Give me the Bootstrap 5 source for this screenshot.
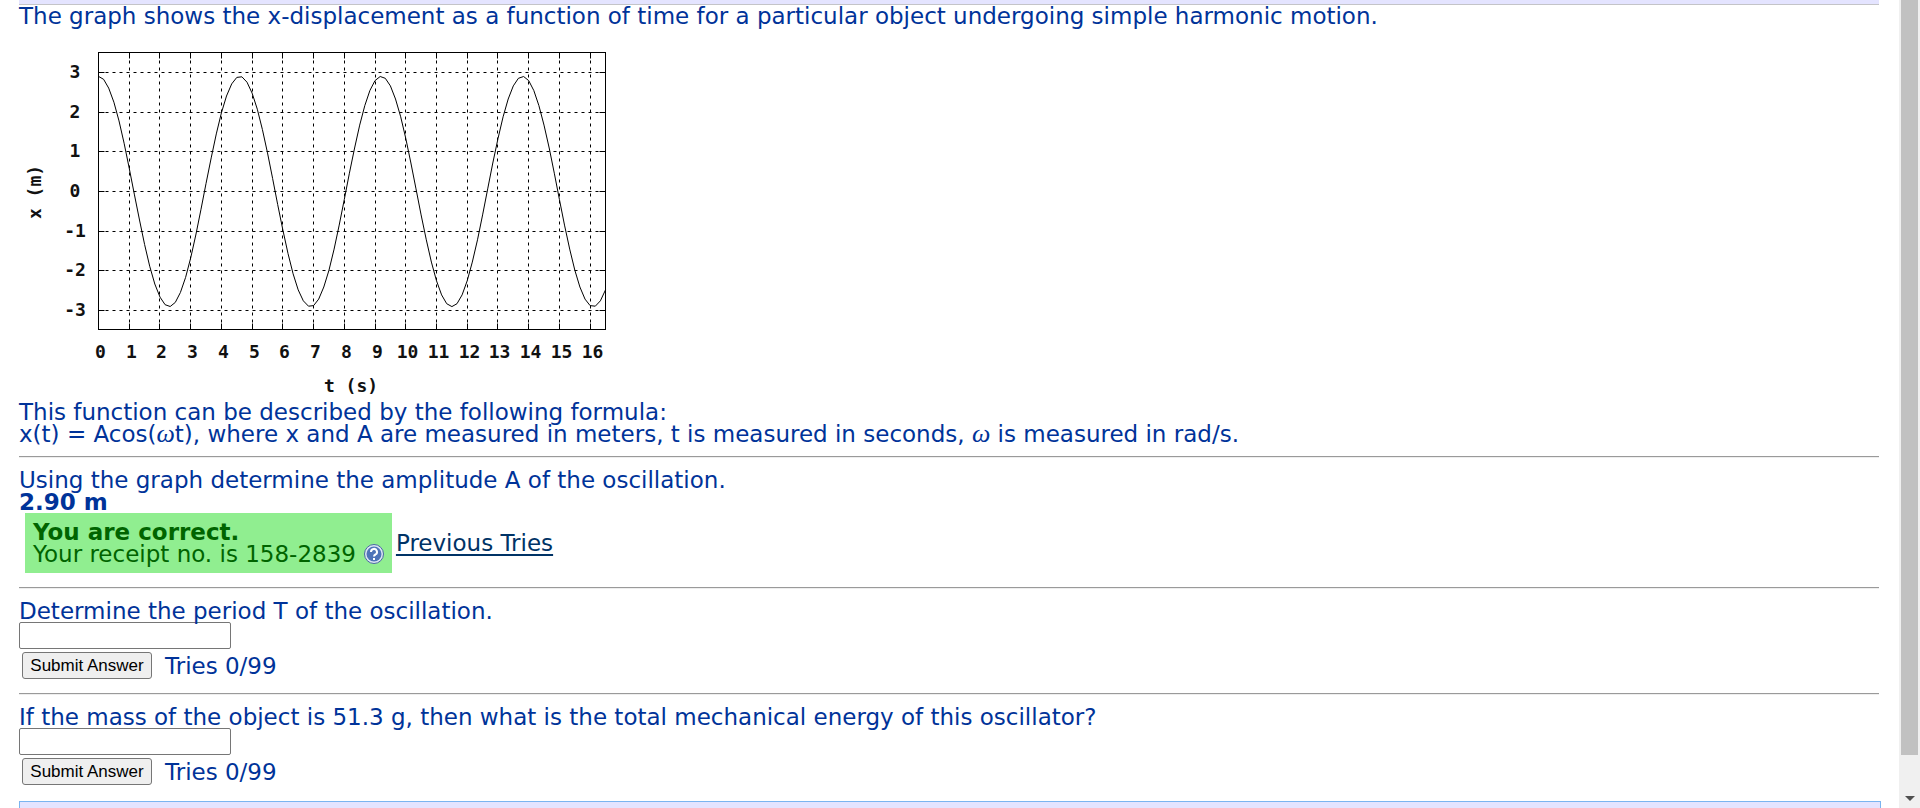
<!DOCTYPE html>
<html lang="en">
<head>
<meta charset="utf-8">
<meta name="viewport" content="width=device-width, initial-scale=1">
<title>Simple harmonic motion</title>
<link href="https://cdn.jsdelivr.net/npm/bootstrap@5.3.0/dist/css/bootstrap.min.css" rel="stylesheet">
<style>
  body { font-family: "DejaVu Sans", Verdana, sans-serif; font-size: 23px; line-height: 22px; color: #003399; background: #fff; }
  .problem { padding: 0 20px 0 19px; }
  .top-strip { height: 5px; background: #e4e4ff; border-bottom: 1px solid #c4c4c8; }
  .plot { width: 600px; height: 374px; }
  .plot text { font: bold 18px "DejaVu Sans Mono", monospace; fill: #111; text-anchor: middle; }
  .rule { height: 2px; margin: 11px 0; border: 0; background: linear-gradient(#9a9a9a 50%, #eee 50%); opacity: 1; }
  .omega { font-family: "Liberation Serif", serif; font-style: italic; font-size: 26px; line-height: 1px; }
  .part { padding-bottom: 3px; }
  .verdict { background: #90ee90; color: #006400; padding: 8px; margin-left: 6px; }
  .tries-link { color: #003366; text-underline-offset: 3px; }
  .answer-box { width: 212px; height: 27px; border: 1px solid #767676; border-radius: 2px; padding: 1px 4px; font-size: 18px; }
  .submit-row { margin-top: 3px; gap: 13px; }
  .submit-btn { width: 130px; height: 27px; border: 1px solid #767676; border-radius: 3px; background: #efefef; color: #000; font: 17px/20px "Liberation Sans", Arial, sans-serif; padding: 0; margin-left: 3px; }
  .bottom-strip { height: 24px; margin: 13px -2px 0 0; background: #e4e4ff; border: 1px solid #7ab4f0; }
  .scroll-track { width: 21px; background: #f0f0f0; }
  .scroll-thumb { width: 17px; background: #c1c1c1; margin-left: 2px; height: 93.5vh; }
</style>
</head>
<body>
<div class="d-flex vh-100 overflow-hidden">
  <main class="problem flex-grow-1 overflow-hidden">
    <div class="top-strip"></div>
    <div>The graph shows the x-displacement as a function of time for a particular object undergoing simple harmonic motion.</div>
    <svg class="plot d-block" viewBox="19 27 600 374" role="img" aria-label="x (m) against t (s)">
      <g id="grid" stroke="#000" fill="none"></g>
      <path id="curve" fill="none" stroke="#000"/>
      <g id="ticks"></g>
      <text x="351" y="392">t (s)</text>
      <text transform="translate(41 192) rotate(-90)">x (m)</text>
    </svg>
    <div>This function can be described by the following formula:</div>
    <div>x(t) = Acos(<span class="omega">ω</span>t), where x and A are measured in meters, t is measured in seconds, <span class="omega">ω</span> is measured in rad/s.</div>
    <hr class="rule">
    <div>Using the graph determine the amplitude A of the oscillation.</div>
    <div class="fw-bold">2.90 m</div>
    <div class="part d-flex align-items-center">
      <div class="verdict">
        <div class="fw-bold">You are correct.</div>
        <div class="d-flex align-items-center">Your receipt no. is 158-2839
          <svg class="ms-2" width="20" height="20" viewBox="0 0 20 20" role="img" aria-label="Help">
            <circle cx="10" cy="10" r="9.500" fill="#dce6f3" stroke="#4a67a3"/>
            <circle cx="10" cy="10" r="7.500" fill="#4f74b8"/>
            <path d="M7 8a3 3 0 1 1 4.500 2.500q-1.500.8-1.500 2M10 14v2" fill="none" stroke="#fff" stroke-width="2"/>
          </svg>
        </div>
      </div>
      <a class="tries-link ms-1" href="#">Previous Tries</a>
    </div>
    <hr class="rule">
    <form class="part">
      <label class="d-block" for="period">Determine the period T of the oscillation.</label>
      <input class="answer-box d-block" id="period" type="text">
      <div class="submit-row d-flex align-items-center"><button class="submit-btn" type="button">Submit Answer</button><span>Tries 0/99</span></div>
    </form>
    <hr class="rule">
    <form class="part">
      <label class="d-block" for="energy">If the mass of the object is 51.3 g, then what is the total mechanical energy of this oscillator?</label>
      <input class="answer-box d-block" id="energy" type="text">
      <div class="submit-row d-flex align-items-center"><button class="submit-btn" type="button">Submit Answer</button><span>Tries 0/99</span></div>
    </form>
    <div class="bottom-strip"></div>
  </main>
  <div class="scroll-track d-flex flex-column justify-content-between flex-shrink-0" aria-hidden="true">
    <div class="scroll-thumb"></div>
    <svg class="mx-auto mb-1" width="10" height="10" viewBox="0 0 10 10"><path d="M0 2h10L5 7z" fill="#505050"/></svg>
  </div>
</div>
<script src="https://cdn.jsdelivr.net/npm/bootstrap@5.3.0/dist/js/bootstrap.bundle.min.js"></script>
<script>
  // Draws x = 2.9 cos(2πt / 4.6) over a dashed grid
  const left = 98.5, right = 605.5, top0 = 52.5, bottom = 329.5, mid = 191.5;
  const ux = (right - left) / 16.5, uy = 39.7;
  const snap = v => Math.floor(v) + .5;
  let grid = `<rect x="${left}" y="${top0}" width="${right - left}" height="${bottom - top0}"/>`, ticks = '';
  const line = (x1, y1, x2, y2, dash) => `<path d="M${x1} ${y1}L${x2} ${y2}"${dash ? ' stroke-dasharray="3 4"' : ''}/>`;
  for (let t = 0; t <= 16; t++) {
    const x = snap(left + t * ux);
    if (t) grid += line(x, bottom, x, top0, true) + line(x, top0, x, top0 + 6) + line(x, bottom, x, bottom - 6);
    ticks += `<text x="${x + 2}" y="358">${t}</text>`;
  }
  for (let v = -3; v <= 3; v++) {
    const y = snap(mid - v * uy);
    grid += line(left, y, right, y, true) + line(left, y, left + 6, y) + line(right, y, right - 6, y);
    ticks += `<text x="75" y="${y + 5}">${v}</text>`;
  }
  let d = '';
  for (let i = 0; i < 100; i++) {
    const t = i * 16.5 / 99;
    d += (i ? 'L' : 'M') + (left + t * ux).toFixed(1) + ' ' + (mid - 2.9 * Math.cos(2 * Math.PI * t / 4.6) * uy).toFixed(1);
  }
  document.getElementById('grid').innerHTML = grid;
  document.getElementById('ticks').innerHTML = ticks;
  document.getElementById('curve').setAttribute('d', d);
</script>
</body>
</html>
